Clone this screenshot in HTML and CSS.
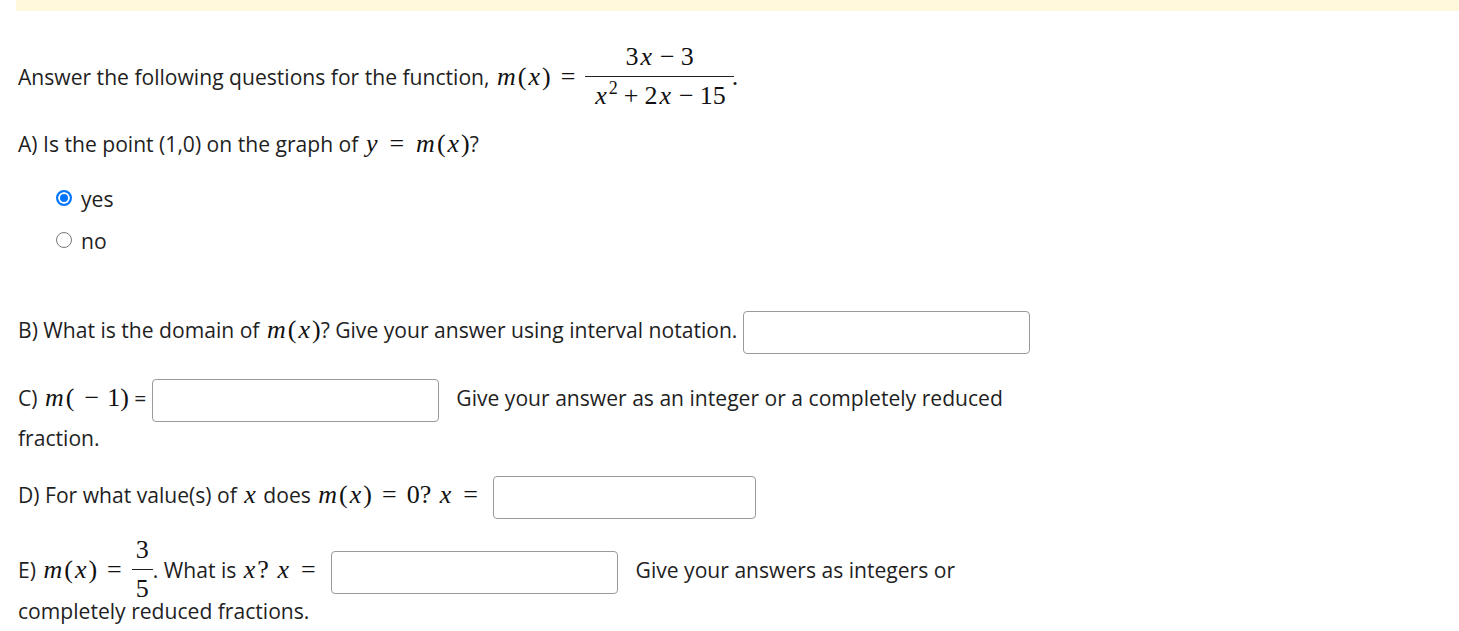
FILE: index.html
```html
<!DOCTYPE html>
<html>
<head>
<meta charset="utf-8">
<link rel="stylesheet" href="styles.css">
</head>
<body>
<div class="bar"></div>
<div class="content">
  <p class="intro">Answer the following questions for the function, <span class="m"><i>m</i>(<i>x</i>)<span class="rel">=</span><span class="frac big"><span class="num">3<i>x</i><span class="bin">−</span>3</span><span class="den"><i>x</i><sup>2</sup><span class="bin">+</span>2<i>x</i><span class="bin">−</span>15</span></span><span class="dot">.</span></span></p>

  <p class="qa">A) Is the point (1,0) on the graph of <span class="m"><i>y</i><span class="rel">=</span><i>m</i>(<i>x</i>)</span>?</p>
  <div class="choices">
    <label class="choice"><span class="radio checked"></span>yes</label>
    <label class="choice"><span class="radio"></span>no</label>
  </div>

  <p class="qb">B) What is the domain of <span class="m"><i>m</i>(<i>x</i>)</span>? Give your answer using interval notation. <span class="box w286"></span></p>

  <p class="qc">C) <span class="m"><i>m</i>(<span class="un">−</span>1)</span> = <span class="box w286"></span> <span class="gap"></span>Give your answer as an integer or a completely reduced fraction.</p>

  <p class="qd">D) For what value(s) of <span class="m"><i>x</i></span> does <span class="m"><i>m</i>(<i>x</i>)<span class="rel">=</span>0?&nbsp;<i>x</i><span class="rel">=</span></span> <span class="box w262"></span></p>

  <p class="qe">E) <span class="m"><i>m</i>(<i>x</i>)<span class="rel">=</span><span class="frac small"><span class="num">3</span><span class="den">5</span></span></span>. What is <span class="m"><i>x</i>?&nbsp;<i>x</i><span class="rel">=</span></span> <span class="box w286"></span> <span class="gap"></span>Give your answers as integers or completely reduced fractions.</p>
</div>
</body>
</html>
```

FILE: styles.css
```css
html, body {
  margin: 0;
  padding: 0;
  background: #fff;
}
body {
  font-family: "Open Sans", "Liberation Sans", sans-serif;
  font-size: 21.1px;
  color: #1f1f1f;
}
.bar {
  height: 11px;
  margin-left: 16px;
  background: #fff8dc;
}
.content {
  padding: 0 18px;
  width: 1030px;
}
p {
  margin: 0;
  line-height: 40px;
}
.m {
  font-family: "Liberation Serif", "DejaVu Serif", serif;
  font-size: 26px;
  white-space: nowrap;
  color: #111;
}
.m i {
  font-family: "Liberation Serif", serif;
  font-style: italic;
  padding: 0 2px;
}
.rel {
  margin: 0 10px;
}
.bin {
  margin: 0 6px;
}
.un {
  margin: 0 8px 0 10px;
}
sup {
  font-size: 18px;
  vertical-align: 10px;
  line-height: 0;
}
.frac {
  display: inline-flex;
  flex-direction: column;
  align-items: center;
  vertical-align: middle;
  line-height: 1;
}
.frac .num {
  padding: 0 4px 6px;
}
.frac .den {
  border-top: 1px solid #222;
  padding: 6px 4px 0;
  width: 100%;
  text-align: center;
}
.frac.big {
  margin-left: 4px;
  position: relative;
  top: -3px;
}
.frac.small {
  margin: -18px 2px;
  position: relative;
  top: -3px;
}
.frac.small .num, .frac.small .den {
  padding-left: 2px;
  padding-right: 2px;
}
.dot {
  margin-left: 2px;
}
.intro {
  margin-top: 36px;
  line-height: 56px;
}
.qa {
  margin-top: 12px;
}
.choices {
  margin-top: 13px;
  padding-left: 38px;
}
.choice {
  display: flex;
  align-items: center;
  height: 42px;
}
.radio {
  width: 14px;
  height: 14px;
  border-radius: 50%;
  border: 1px solid #777;
  margin-right: 9px;
  box-sizing: content-box;
}
.radio.checked {
  border: 2px solid #0075ff;
  background: #0075ff;
  box-shadow: inset 0 0 0 2px #fff;
  width: 12px;
  height: 12px;
}
.qb {
  margin-top: 49px;
}
.qc {
  margin-top: 28px;
}
.qd {
  margin-top: 17px;
}
.qe {
  margin-top: 34px;
  line-height: 41px;
}
.box {
  display: inline-block;
  border: 1px solid #9a9a9a;
  border-radius: 4px;
  vertical-align: middle;
  box-sizing: border-box;
  background: #fff;
  height: 43px;
  margin: -6px 0;
}
.w286 { width: 287px; }
.w262 { width: 263px; }
.gap {
  display: inline-block;
  width: 12px;
}
```
